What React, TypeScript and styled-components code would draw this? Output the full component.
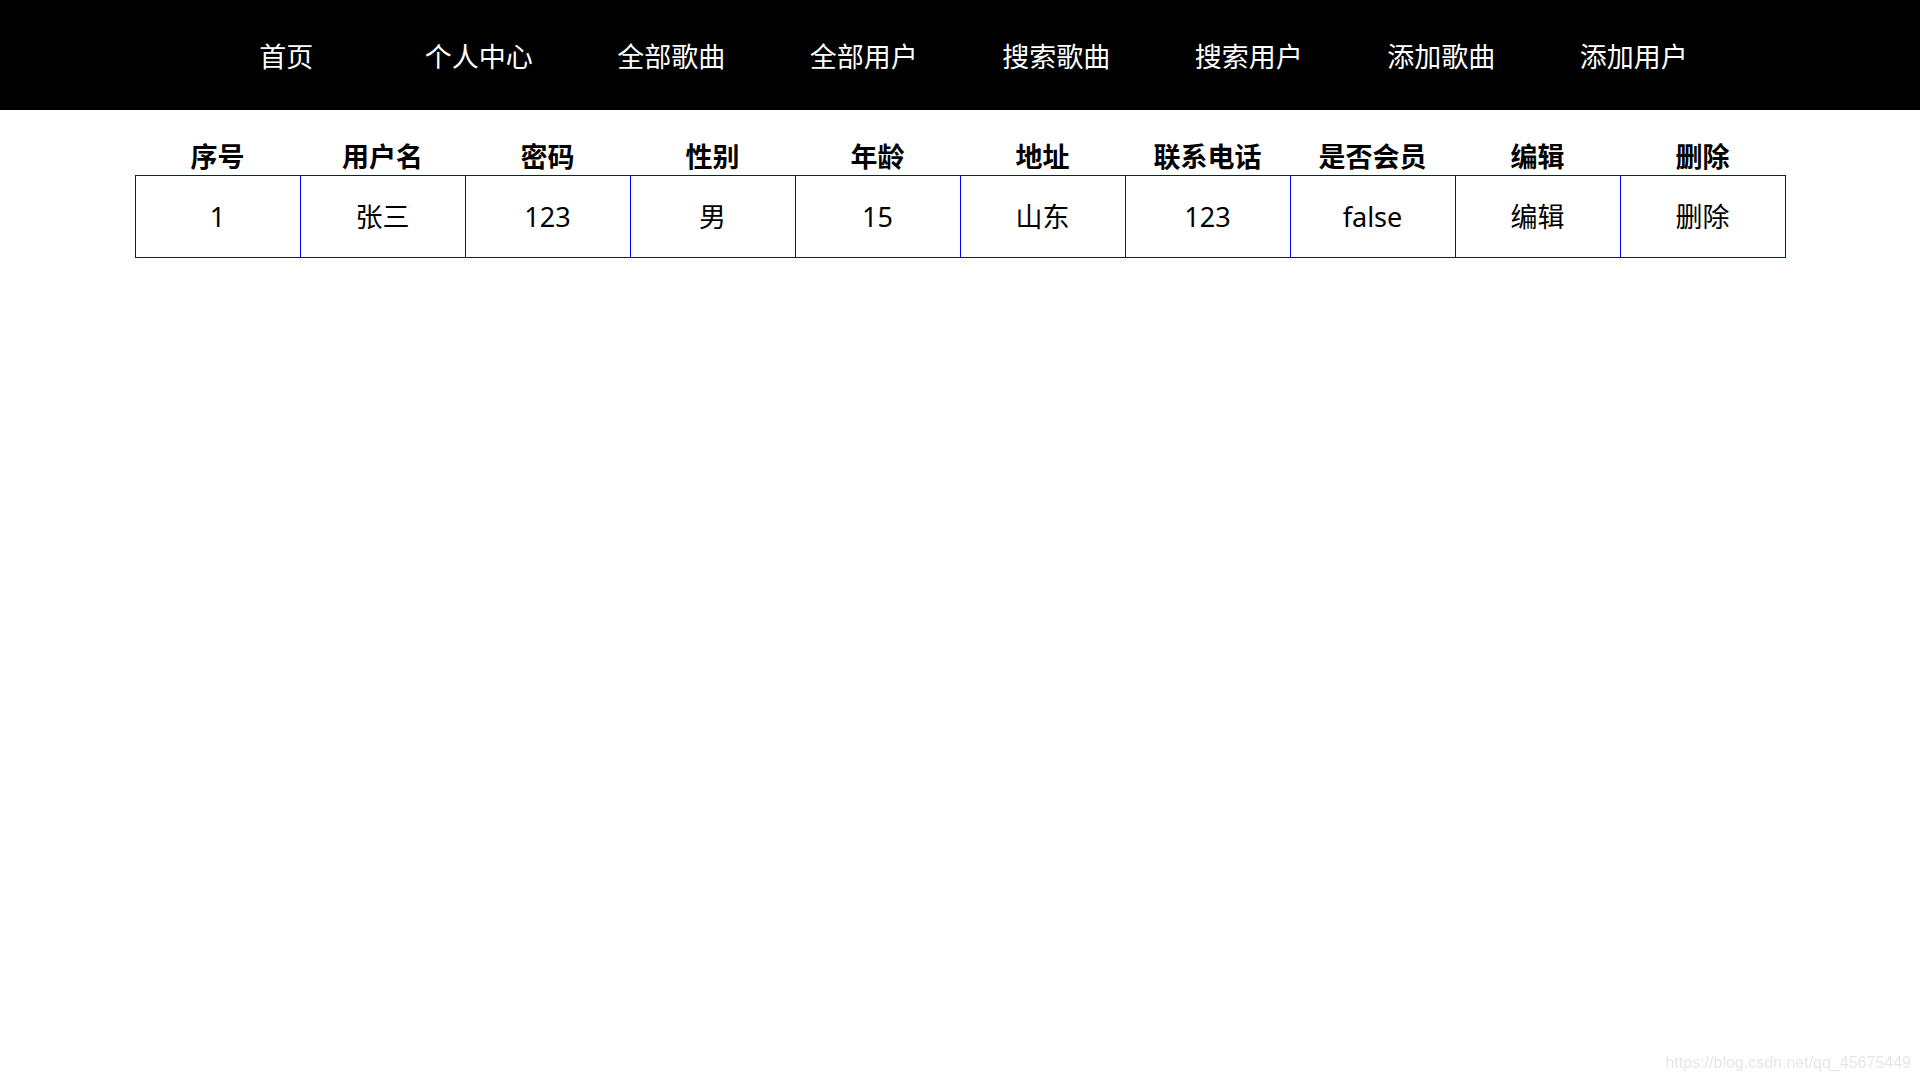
import * as React from "react"
import styled, { createGlobalStyle } from "styled-components"

const GlobalStyle = createGlobalStyle`
  html, body {
    margin: 0;
    padding: 0;
    background: #fff;
  }
  body {
    font-family: "Noto Sans", "Noto Sans CJK SC", sans-serif;
    color: #000;
  }
`

const Page = styled.div`
  min-height: 1080px;
`

const NavBar = styled.nav`
  height: 110px;
  box-sizing: border-box;
  padding-top: 4px;
  background: #000;
  display: flex;
  justify-content: center;
  align-items: center;
`

const NavList = styled.ul`
  display: flex;
  margin: 0;
  padding: 0;
  list-style: none;
`

const NavItem = styled.li`
  width: 192.5px;
  text-align: center;
  font-size: 27px;
  line-height: 36px;
  color: #fff;
  cursor: pointer;
`

const Main = styled.main`
  padding-top: 25px;
`

const Table = styled.table`
  margin: 0 auto;
  border-collapse: collapse;
  table-layout: fixed;
  width: 1650px;
`

const HeadCell = styled.th`
  width: 165px;
  height: 40px;
  padding: 0;
  font-size: 27px;
  font-weight: 700;
  line-height: 36px;
  text-align: center;
  vertical-align: bottom;
`

const Cell = styled.td`
  height: 81px;
  padding: 0;
  border: 1px solid #0000ff;
  font-size: 27px;
  line-height: 36px;
  text-align: center;
  vertical-align: middle;
`

const Watermark = styled.div`
  position: fixed;
  right: 9px;
  bottom: 8px;
  font-family: "Liberation Sans", Arial, sans-serif;
  font-size: 16px;
  line-height: 18px;
  color: #e6e6e6;
`

const navLinks = [
  "首页",
  "个人中心",
  "全部歌曲",
  "全部用户",
  "搜索歌曲",
  "搜索用户",
  "添加歌曲",
  "添加用户",
]

const columns = ["序号", "用户名", "密码", "性别", "年龄", "地址", "联系电话", "是否会员", "编辑", "删除"]

interface User {
  id: number;
  username: string;
  password: string;
  sex: string;
  age: number;
  address: string;
  phone: string;
  vip: boolean;
}

const users: User[] = [
  { id: 1, username: "张三", password: "123", sex: "男", age: 15, address: "山东", phone: "123", vip: false },
]

export default function App() {
  return (
    <Page>
      <GlobalStyle />
      <NavBar>
        <NavList>
          {navLinks.map((link) => (
            <NavItem key={link}>{link}</NavItem>
          ))}
        </NavList>
      </NavBar>
      <Main>
        <Table>
          <thead>
            <tr>
              {columns.map((c) => (
                <HeadCell key={c}>{c}</HeadCell>
              ))}
            </tr>
          </thead>
          <tbody>
            {users.map((u) => (
              <tr key={u.id}>
                <Cell>{u.id}</Cell>
                <Cell>{u.username}</Cell>
                <Cell>{u.password}</Cell>
                <Cell>{u.sex}</Cell>
                <Cell>{u.age}</Cell>
                <Cell>{u.address}</Cell>
                <Cell>{u.phone}</Cell>
                <Cell>{String(u.vip)}</Cell>
                <Cell>编辑</Cell>
                <Cell>删除</Cell>
              </tr>
            ))}
          </tbody>
        </Table>
      </Main>
      <Watermark>https://blog.csdn.net/qq_45675449</Watermark>
    </Page>
  )
}
